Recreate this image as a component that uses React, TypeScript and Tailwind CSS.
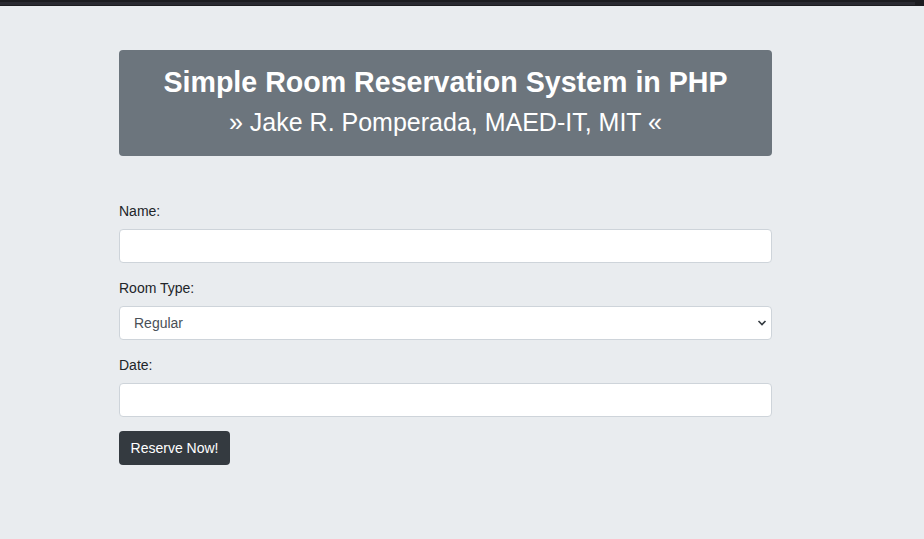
import React from 'react';

const Field = ({ label, children }: { label: string; children: React.ReactNode }) => (
  <div className="mb-[15px]">
    <label className="block text-[14px] leading-[21px] text-[#212529] mb-[7px]">{label}</label>
    {children}
  </div>
);

const inputClass =
  'block w-full h-[34px] px-[12px] bg-white border border-[#ced4da] rounded-[4px] text-[14px] text-[#495057] outline-none';

const App = () => {
  return (
    <div className="min-h-[539px] bg-[#e9ecef] font-['Liberation_Sans',Arial,sans-serif]">
      <div className="h-[6px] bg-[#1c1c20] pt-[2px] pr-[9px]">
        <div className="h-[3px] bg-[#2a2a31]" />
      </div>
      <div className="w-[653px] ml-[119px] pt-[44px]">
        <div className="bg-[#6c757d] rounded-[4px] h-[106px] pt-[14px] text-center text-white">
          <h1 className="text-[28.6px] leading-[36px] font-bold">Simple Room Reservation System in PHP</h1>
          <p className="text-[25px] leading-[34px] mt-[5px]">» Jake R. Pomperada, MAED-IT, MIT «</p>
        </div>

        <form className="mt-[45px]" onSubmit={(e) => e.preventDefault()}>
          <Field label="Name:">
            <input type="text" className={inputClass} />
          </Field>
          <Field label="Room Type:">
            <div className="relative">
              <select className={inputClass + ' appearance-none pl-[14px]'} defaultValue="Regular">
                <option>Regular</option>
                <option>Deluxe</option>
                <option>Suite</option>
              </select>
              <svg
                className="absolute right-[5px] top-[13px] pointer-events-none"
                width="10"
                height="8"
                viewBox="0 0 10 8"
                fill="none"
              >
                <path d="M1.5 2 L5 5.5 L8.5 2" stroke="#343a40" strokeWidth="1.6" />
              </svg>
            </div>
          </Field>
          <Field label="Date:">
            <input type="text" className={inputClass} />
          </Field>
          <button
            type="submit"
            className="-mt-[1px] h-[34px] w-[111px] bg-[#343a40] text-white text-[14px] rounded-[4px]"
          >
            Reserve Now!
          </button>
        </form>
      </div>
    </div>
  );
};

export default App;
